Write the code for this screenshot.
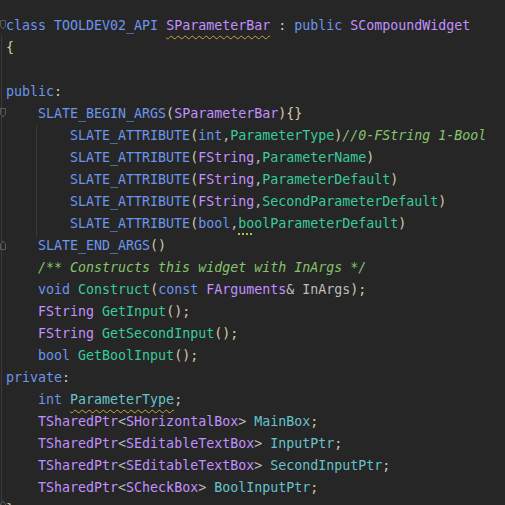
import React from 'react'

const KW = 'text-[#6c95eb]'
const CLS = 'text-[#c191ff]'
const FN = 'text-[#39cc9b]'
const FLD = 'text-[#66c3cc]'
const CM = 'text-[#85c46c] italic'
const PN = 'text-[#d5cba6]'
const TX = 'text-[#bdbdbd]'

const lines = [
  [],
  [[KW, 'class '], [KW, 'TOOLDEV02_API '], [CLS + ' underline decoration-wavy decoration-[#c7a83a] decoration-1 underline-offset-[5px]', 'SParameterBar'], [PN, ' : '], [KW, 'public '], [CLS, 'SCompoundWidget']],
  [[PN, '{']],
  [],
  [[KW, 'public'], [PN, ':']],
  [[KW, '    SLATE_BEGIN_ARGS'], [PN, '('], [CLS, 'SParameterBar'], [PN, '){}']],
  [[KW, '        SLATE_ATTRIBUTE'], [PN, '('], [KW, 'int'], [TX, ','], [FN, 'ParameterType'], [PN, ')'], [CM, '//0-FString 1-Bool']],
  [[KW, '        SLATE_ATTRIBUTE'], [PN, '('], [CLS, 'FString'], [TX, ','], [FN, 'ParameterName'], [PN, ')']],
  [[KW, '        SLATE_ATTRIBUTE'], [PN, '('], [CLS, 'FString'], [TX, ','], [FN, 'ParameterDefault'], [PN, ')']],
  [[KW, '        SLATE_ATTRIBUTE'], [PN, '('], [CLS, 'FString'], [TX, ','], [FN, 'SecondParameterDefault'], [PN, ')']],
  [[KW, '        SLATE_ATTRIBUTE'], [PN, '('], [KW, 'bool'], [TX, ','], [FN + ' underline decoration-dotted decoration-[#b5c23a] decoration-2 underline-offset-[5px]', 'bo'], [FN, 'olParameterDefault'], [PN, ')']],
  [[KW, '    SLATE_END_ARGS'], [PN, '()']],
  [[CM, '    /** Constructs this widget with InArgs */']],
  [[KW, '    void '], [FN, 'Construct'], [PN, '('], [KW, 'const '], [CLS, 'FArguments'], [TX, '& InArgs'], [PN, ');']],
  [[CLS, '    FString '], [FN, 'GetInput'], [PN, '();']],
  [[CLS, '    FString '], [FN, 'GetSecondInput'], [PN, '();']],
  [[KW, '    bool '], [FN, 'GetBoolInput'], [PN, '();']],
  [[KW, 'private'], [PN, ':']],
  [[KW, '    int '], [FLD + ' underline decoration-wavy decoration-[#c7a83a] decoration-1 underline-offset-[5px]', 'ParameterType'], [PN, ';']],
  [[CLS, '    TSharedPtr'], [TX, '<'], [CLS, 'SHorizontalBox'], [TX, '> '], [FLD, 'MainBox'], [PN, ';']],
  [[CLS, '    TSharedPtr'], [TX, '<'], [CLS, 'SEditableTextBox'], [TX, '> '], [FLD, 'InputPtr'], [PN, ';']],
  [[CLS, '    TSharedPtr'], [TX, '<'], [CLS, 'SEditableTextBox'], [TX, '> '], [FLD, 'SecondInputPtr'], [PN, ';']],
  [[CLS, '    TSharedPtr'], [TX, '<'], [CLS, 'SCheckBox'], [TX, '> '], [FLD, 'BoolInputPtr'], [PN, ';']],
  [[PN, '}']],
]

function Fold({ top, down }) {
  return (
    <svg className="absolute left-0" style={{ top }} width="6" height="10" viewBox="0 0 6 10">
      {down ? (
        <path d="M0.5 0.5 H5.5 V6 L3 9 L0.5 6 Z" fill="none" stroke="#5a5a5a" strokeWidth="1" />
      ) : (
        <path d="M0.5 9.5 H5.5 V4 L3 1 L0.5 4 Z" fill="none" stroke="#5a5a5a" strokeWidth="1" />
      )}
    </svg>
  )
}

export default function App() {
  return (
    <div className="relative w-[505px] h-[505px] overflow-hidden bg-[#262626]">
      <div className="absolute left-[1px] top-[36px] w-px h-[470px] bg-[#3a3a3a]" />
      <div className="absolute left-[36px] top-[125px] w-px h-[112px] bg-[#3a3a3a]" />
      <Fold top={20} down />
      <Fold top={108} down />
      <Fold top={240} />
      <Fold top={500} />
      <div className="pl-[6px] -mt-[7px] font-['DejaVu_Sans_Mono',monospace] text-[13.3px] leading-[22px] whitespace-pre">
        {lines.map((line, i) => (
          <div key={i} className="h-[22px]">
            {line.map(([c, t], j) => (
              <span key={j} className={c}>{t}</span>
            ))}
          </div>
        ))}
      </div>
    </div>
  )
}
